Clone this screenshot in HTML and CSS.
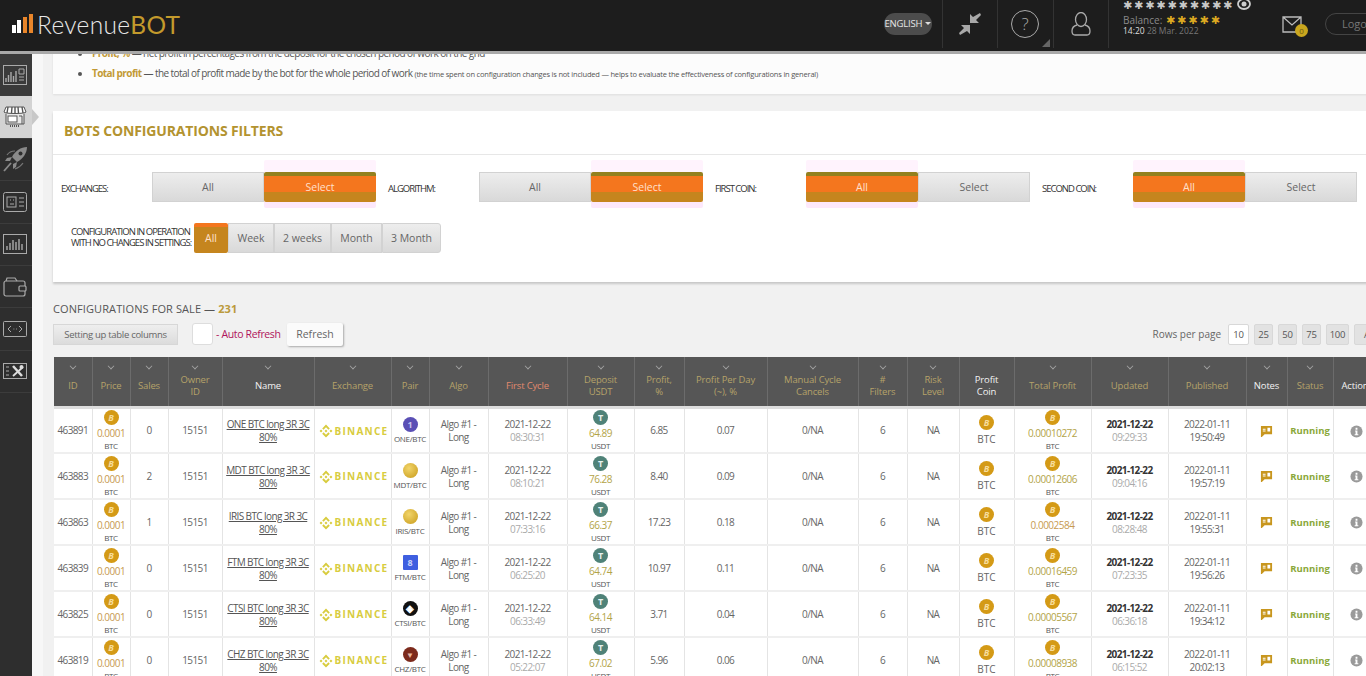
FILE: index.html
```html
<!DOCTYPE html>
<html lang="en">
<head>
<meta charset="utf-8">
<title>RevenueBOT</title>
<link rel="stylesheet" href="styles.css">
</head>
<body>
<svg class="defs" width="0" height="0">
  <symbol id="bn" viewBox="0 0 24 24"><path fill="currentColor" d="M12 1l6.500 6.500-2.300 2.300L12 5.600 7.800 9.800 5.500 7.500zM12 23l-6.500-6.500 2.300-2.300 4.200 4.200 4.200-4.200 2.300 2.300zM3.500 9.500L6 12l-2.500 2.500L1 12zM20.500 9.500L23 12l-2.500 2.500L18 12zM12 9.500l2.500 2.500-2.500 2.500L9.500 12z"/></symbol>
  <symbol id="note" viewBox="0 0 14 14"><path fill="#c8961e" d="M1 1h12v9H5l-3 3H1z"/><path fill="#fff" d="M8 3h3v4H8zM3 4h3v1H3zM3 6h3v1H3z"/></symbol>
  <symbol id="info" viewBox="0 0 14 14"><circle cx="7" cy="7" r="6.500" fill="#9a9a9a"/><path fill="#fff" d="M6 3h2v2H6zM5.500 6H8v4h1v1H5v-1h1V7h-.5z"/></symbol>
</svg>
<header class="top">
  <div class="brand">
    <svg class="bars" width="22" height="20" viewBox="0 0 22 20"><path fill="#fff" d="M0 11h4v8H0zM5 6h4v13H5z"/><path fill="#e8852a" d="M11 3h4v16h-4zM17 0h4v19h-4z"/></svg>
    <span class="word">Revenue<b>BOT</b></span>
  </div>
  <div class="lang">ENGLISH <i class="caret"></i></div>
  <div class="hcell">
    <svg width="24" height="22" viewBox="0 0 24 22"><path fill="#a8a8a8" d="M22 0l1 2-5 5 3 3h-9V1l3 3zM2 22l-1-2 5-5-3-3h9v9l-3-3z"/></svg>
  </div>
  <div class="hcell help">
    <svg width="30" height="30" viewBox="0 0 30 30"><circle cx="15" cy="15" r="13.500" fill="none" stroke="#aaa"/><text x="15" y="21" font-size="17" font-family="Open Sans" font-weight="300" text-anchor="middle" fill="#aaa">?</text></svg>
  </div>
  <div class="hcell">
    <svg width="20" height="24" viewBox="0 0 20 24"><ellipse cx="10" cy="7.500" rx="5.500" ry="7" fill="none" stroke="#aaa" stroke-width="1.300"/><path d="M6 13C2 14 1 16 1 19c0 3 1 4 3 4h12c2 0 3-1 3-4 0-3-1-5-5-6" fill="none" stroke="#aaa" stroke-width="1.300"/></svg>
  </div>
  <div class="account">
    <div class="mask">✱✱✱✱✱✱✱✱✱✱<svg width="14" height="12" viewBox="0 0 14 12"><ellipse cx="7" cy="6" rx="6" ry="5" fill="none" stroke="#ccc" stroke-width="1.800"/><circle cx="7" cy="6" r="2.500" fill="#ccc"/></svg></div>
    <div class="bal">Balance: <span>✱✱✱✱✱</span></div>
    <div class="when"><b>14:20</b> 28 Mar. 2022</div>
  </div>
  <div class="mail">
    <svg width="20" height="17" viewBox="0 0 20 17"><path d="M1 1h18v15H1zM1 1l9 8 9-8" fill="none" stroke="#bbb" stroke-width="1.300"/></svg>
    <span class="badge">0</span>
  </div>
  <div class="logout">Logout</div>
</header>
<div class="shell">
  <nav class="side">
    <a class="nav dim"><svg width="24" height="20" viewBox="0 0 24 20"><g fill="none" stroke="#aaa"><rect x=".5" y=".5" width="23" height="19"/><path d="M3 17v-4M5.500 17V10M8 17V7M10.500 17V11M13 17V6" stroke-width="1.400"/><path d="M16 4h5v5h-5zM16 12h5M16 15h5"/></g></svg></a>
    <a class="nav on"><svg width="24" height="22" viewBox="0 0 24 22"><g fill="none" stroke="#555"><path d="M3 1h18l2 5c0 2-22 2-22 0z" fill="#fff"/><path d="M5 1L4 7M9 1L8.500 7M12 1v6M15 1l.5 6M19 1l1 6" stroke-width="1.400"/><path d="M3 8v10h18V8" fill="#e8e8e8"/><rect x="5" y="10" width="9" height="6" fill="#fff"/><path d="M16 10h3v8"/><path d="M7 20h10" stroke-width="2" stroke-dasharray="1 1"/></g></svg></a>
    <a class="nav"><svg width="26" height="26" viewBox="0 0 26 26"><path fill="#8a8a8a" d="M25 1c-6 0-12 4-15 10l5 5c6-3 10-9 10-15zM10 11l-5 1-2 3 5 0zM15 16l-1 5-3 2 0-5z"/><circle cx="18.500" cy="7.500" r="2" fill="#2e2e2e"/><path d="M9 17l-7 8" stroke="#8a8a8a" stroke-width="1.800" fill="none"/><path d="M5 9c2-3 5-4 8-4M21 17c-2 3-5 5-8 6" stroke="#777" stroke-width="1.200" fill="none"/></svg></a>
    <a class="nav"><svg width="24" height="20" viewBox="0 0 24 20"><g fill="none" stroke="#aaa"><rect x=".5" y=".5" width="23" height="19" rx="2"/><rect x="4" y="5" width="9" height="10"/><path d="M7 8h1M10 8h1M7 12h4M16 6h5M16 10h5M16 14h5"/></g></svg></a>
    <a class="nav"><svg width="24" height="20" viewBox="0 0 24 20"><g fill="none" stroke="#aaa"><rect x=".5" y=".5" width="23" height="19"/><path d="M4 16v-4M7 16V9M10 16V6M13 16V8M16 16V5M19 16v-6" stroke-width="1.400"/></g></svg></a>
    <a class="nav"><svg width="24" height="20" viewBox="0 0 24 20"><g fill="none" stroke="#aaa" stroke-width="1.200"><path d="M3 4l1-3h8l2 3"/><rect x="1" y="4" width="21" height="15" rx="2"/><rect x="16" y="9" width="7" height="5" rx="1" fill="#2e2e2e"/></g></svg></a>
    <a class="nav"><svg width="24" height="16" viewBox="0 0 24 16"><rect x=".5" y=".5" width="23" height="15" rx="1" fill="none" stroke="#aaa"/><path d="M8 5L5 8l3 3M16 5l3 3-3 3" fill="none" stroke="#aaa"/><path d="M10.500 8h.8M13 8h.8" stroke="#aaa"/></svg></a>
    <a class="nav"><svg width="24" height="16" viewBox="0 0 24 16"><rect x=".5" y=".5" width="23" height="15" fill="none" stroke="#aaa"/><path d="M3 4h3M3 8h3M3 12h3" stroke="#aaa"/><path d="M10 3l9 10" stroke="#ddd" stroke-width="2.500"/><path d="M20 4l-10 9" stroke="#ddd" stroke-width="1.800"/><circle cx="18.500" cy="4" r="2" fill="#ddd"/></svg></a>
  </nav>
  <main class="main">
    <section class="card notes">
      <ul>
        <li><b>Profit, %</b> — net profit in percentages from the deposit for the chosen period of work on the grid</li>
        <li><b>Total profit</b> — the total of profit made by the bot for the whole period of work <small>(the time spent on configuration changes is not included — helps to evaluate the effectiveness of configurations in general)</small></li>
      </ul>
    </section>
    <section class="card filters">
      <h2>BOTS CONFIGURATIONS FILTERS</h2>
      <div class="frow">
        <div class="fitem"><span class="flabel">EXCHANGES:</span><div class="seg"><button class="off">All</button><button class="act halo">Select</button></div></div>
        <div class="fitem"><span class="flabel">ALGORITHM:</span><div class="seg"><button class="off">All</button><button class="act halo">Select</button></div></div>
        <div class="fitem"><span class="flabel">FIRST COIN:</span><div class="seg"><button class="act halo">All</button><button class="off">Select</button></div></div>
        <div class="fitem"><span class="flabel">SECOND COIN:</span><div class="seg"><button class="act halo">All</button><button class="off">Select</button></div></div>
      </div>
      <div class="frow2">
        <span class="flabel2">CONFIGURATION IN OPERATION<br>WITH NO CHANGES IN SETTINGS:</span>
        <div class="seg2"><button class="act s34">All</button><button class="off s46">Week</button><button class="off s57">2 weeks</button><button class="off s51">Month</button><button class="off s59">3 Month</button></div>
      </div>
    </section>
    <h3 class="count">CONFIGURATIONS FOR SALE — <b>231</b></h3>
    <div class="tools">
      <button class="plain">Setting up table columns</button>
      <span class="check"></span>
      <span class="auto">- Auto Refresh</span>
      <button class="refresh">Refresh</button>
      <span class="rows">Rows per page</span>
      <div class="pager"><button class="cur">10</button><button>25</button><button>50</button><button>75</button><button class="wide">100</button><button class="last">All</button></div>
    </div>
    <table class="grid">
      <colgroup><col class="c38"><col class="c38"><col class="c38"><col class="c54"><col class="c92"><col class="c77"><col class="c38"><col class="c59"><col class="c79"><col class="c67"><col class="c50"><col class="c83"><col class="c91"><col class="c49"><col class="c52"><col class="c55"><col class="c77"><col class="c77"><col class="c78"><col class="c41"><col class="c46"><col class="c46"></colgroup>
      <thead><tr>
        <th>ID</th><th>Price</th><th>Sales</th><th>Owner<br>ID</th><th class="w">Name</th><th>Exchange</th><th>Pair</th><th>Algo</th><th class="r">First Cycle</th><th>Deposit<br>USDT</th><th>Profit,<br>%</th><th>Profit Per Day<br>(~), %</th><th>Manual Cycle<br>Cancels</th><th>#<br>Filters</th><th>Risk<br>Level</th><th class="w ns">Profit<br>Coin</th><th>Total Profit</th><th>Updated</th><th>Published</th><th class="w">Notes</th><th>Status</th><th class="w act-h ns">Action</th>
      </tr></thead>
      <tbody>
        <tr><td>463891</td><td><i class="coin btc">B</i><span class="amt">0.0001</span><span class="unit">BTC</span></td><td>0</td><td>15151</td><td><a class="nm">ONE BTC long 3R 3C 80%</a></td><td class="ex"><svg class="bn"><use href="#bn"/></svg><span>BINANCE</span></td><td><i class="coin one">1</i><span class="unit">ONE/BTC</span></td><td>Algo #1 - Long</td><td>2021-12-22<span class="tm">08:30:31</span></td><td><i class="coin usdt">T</i><span class="amt g">64.89</span><span class="unit">USDT</span></td><td>6.85</td><td>0.07</td><td>0/NA</td><td>6</td><td>NA</td><td><i class="coin btc">B</i><span class="pc">BTC</span></td><td><i class="coin btc">B</i><span class="amt g">0.00010272</span><span class="unit">BTC</span></td><td><strong>2021-12-22</strong><span class="tm">09:29:33</span></td><td>2022-01-11<span class="dt">19:50:49</span></td><td><svg class="ic"><use href="#note"/></svg></td><td class="run">Running</td><td><svg class="ic"><use href="#info"/></svg></td></tr>
        <tr><td>463883</td><td><i class="coin btc">B</i><span class="amt">0.0001</span><span class="unit">BTC</span></td><td>2</td><td>15151</td><td><a class="nm">MDT BTC long 3R 3C 80%</a></td><td class="ex"><svg class="bn"><use href="#bn"/></svg><span>BINANCE</span></td><td><i class="coin gold"></i><span class="unit">MDT/BTC</span></td><td>Algo #1 - Long</td><td>2021-12-22<span class="tm">08:10:21</span></td><td><i class="coin usdt">T</i><span class="amt g">76.28</span><span class="unit">USDT</span></td><td>8.40</td><td>0.09</td><td>0/NA</td><td>6</td><td>NA</td><td><i class="coin btc">B</i><span class="pc">BTC</span></td><td><i class="coin btc">B</i><span class="amt g">0.00012606</span><span class="unit">BTC</span></td><td><strong>2021-12-22</strong><span class="tm">09:04:16</span></td><td>2022-01-11<span class="dt">19:57:19</span></td><td><svg class="ic"><use href="#note"/></svg></td><td class="run">Running</td><td><svg class="ic"><use href="#info"/></svg></td></tr>
        <tr><td>463863</td><td><i class="coin btc">B</i><span class="amt">0.0001</span><span class="unit">BTC</span></td><td>1</td><td>15151</td><td><a class="nm">IRIS BTC long 3R 3C 80%</a></td><td class="ex"><svg class="bn"><use href="#bn"/></svg><span>BINANCE</span></td><td><i class="coin gold"></i><span class="unit">IRIS/BTC</span></td><td>Algo #1 - Long</td><td>2021-12-22<span class="tm">07:33:16</span></td><td><i class="coin usdt">T</i><span class="amt g">66.37</span><span class="unit">USDT</span></td><td>17.23</td><td>0.18</td><td>0/NA</td><td>6</td><td>NA</td><td><i class="coin btc">B</i><span class="pc">BTC</span></td><td><i class="coin btc">B</i><span class="amt">0.0002584</span><span class="unit">BTC</span></td><td><strong>2021-12-22</strong><span class="tm">08:28:48</span></td><td>2022-01-11<span class="dt">19:55:31</span></td><td><svg class="ic"><use href="#note"/></svg></td><td class="run">Running</td><td><svg class="ic"><use href="#info"/></svg></td></tr>
        <tr><td>463839</td><td><i class="coin btc">B</i><span class="amt">0.0001</span><span class="unit">BTC</span></td><td>0</td><td>15151</td><td><a class="nm">FTM BTC long 3R 3C 80%</a></td><td class="ex"><svg class="bn"><use href="#bn"/></svg><span>BINANCE</span></td><td><i class="coin ftm">8</i><span class="unit">FTM/BTC</span></td><td>Algo #1 - Long</td><td>2021-12-22<span class="tm">06:25:20</span></td><td><i class="coin usdt">T</i><span class="amt g">64.74</span><span class="unit">USDT</span></td><td>10.97</td><td>0.11</td><td>0/NA</td><td>6</td><td>NA</td><td><i class="coin btc">B</i><span class="pc">BTC</span></td><td><i class="coin btc">B</i><span class="amt g">0.00016459</span><span class="unit">BTC</span></td><td><strong>2021-12-22</strong><span class="tm">07:23:35</span></td><td>2022-01-11<span class="dt">19:56:26</span></td><td><svg class="ic"><use href="#note"/></svg></td><td class="run">Running</td><td><svg class="ic"><use href="#info"/></svg></td></tr>
        <tr><td>463825</td><td><i class="coin btc">B</i><span class="amt">0.0001</span><span class="unit">BTC</span></td><td>0</td><td>15151</td><td><a class="nm">CTSI BTC long 3R 3C 80%</a></td><td class="ex"><svg class="bn"><use href="#bn"/></svg><span>BINANCE</span></td><td><i class="coin ctsi">◈</i><span class="unit">CTSI/BTC</span></td><td>Algo #1 - Long</td><td>2021-12-22<span class="tm">06:33:49</span></td><td><i class="coin usdt">T</i><span class="amt g">64.14</span><span class="unit">USDT</span></td><td>3.71</td><td>0.04</td><td>0/NA</td><td>6</td><td>NA</td><td><i class="coin btc">B</i><span class="pc">BTC</span></td><td><i class="coin btc">B</i><span class="amt g">0.00005567</span><span class="unit">BTC</span></td><td><strong>2021-12-22</strong><span class="tm">06:36:18</span></td><td>2022-01-11<span class="dt">19:34:12</span></td><td><svg class="ic"><use href="#note"/></svg></td><td class="run">Running</td><td><svg class="ic"><use href="#info"/></svg></td></tr>
        <tr><td>463819</td><td><i class="coin btc">B</i><span class="amt">0.0001</span><span class="unit">BTC</span></td><td>0</td><td>15151</td><td><a class="nm">CHZ BTC long 3R 3C 80%</a></td><td class="ex"><svg class="bn"><use href="#bn"/></svg><span>BINANCE</span></td><td><i class="coin chz">▼</i><span class="unit">CHZ/BTC</span></td><td>Algo #1 - Long</td><td>2021-12-22<span class="tm">05:22:07</span></td><td><i class="coin usdt">T</i><span class="amt g">67.02</span><span class="unit">USDT</span></td><td>5.96</td><td>0.06</td><td>0/NA</td><td>6</td><td>NA</td><td><i class="coin btc">B</i><span class="pc">BTC</span></td><td><i class="coin btc">B</i><span class="amt g">0.00008938</span><span class="unit">BTC</span></td><td><strong>2021-12-22</strong><span class="tm">06:15:52</span></td><td>2022-01-11<span class="dt">20:02:13</span></td><td><svg class="ic"><use href="#note"/></svg></td><td class="run">Running</td><td><svg class="ic"><use href="#info"/></svg></td></tr>
      </tbody>
    </table>
  </main>
</div>
</body>
</html>
```
FILE: styles.css
```css
* { box-sizing: border-box; }
html, body { margin: 0; height: 676px; overflow: hidden; }
body { background: #f1f1f1; font-family: "Open Sans", "Liberation Sans", sans-serif; color: #555; }
.defs { position: absolute; }
button { font-family: inherit; cursor: pointer; }

/* header */
.top { position: relative; z-index: 3; height: 54px; background: #1d1d1d; border-bottom: 3px solid #a9a9a9; display: flex; align-items: stretch; color: #aaa; }
.brand { flex: 1; display: flex; align-items: center; padding: 0 0 3px 12px; }
.bars { margin-right: 3px; }
.word { font-family: Lato, "Open Sans", sans-serif; font-weight: 300; font-size: 24.500px; color: #e8e8e8; letter-spacing: .3px; }
.word b { font-weight: 400; color: #c39a2c; }
.lang { align-self: flex-start; margin: 13px 10px 0 0; width: 48px; height: 22px; border-radius: 11px; background: #4c4c4c; color: #e6e6e6; font-size: 9.500px; line-height: 22px; text-align: center; white-space: nowrap; letter-spacing: -.2px; }
.caret { display: inline-block; border: 3px solid transparent; border-top-color: #ddd; border-bottom: 0; vertical-align: 2px; }
.hcell { position: relative; width: 55.500px; height: 48px; border-left: 1px solid #333; display: flex; align-items: center; justify-content: center; }
.help::after { content: ""; position: absolute; right: 3px; bottom: 1px; border: 4px solid transparent; border-right-color: #666; border-bottom-color: #666; }
.account { width: 157px; height: 48px; border-left: 1px solid #333; padding-left: 14px; display: flex; flex-direction: column; }
.mask { margin-top: -2px; font-family: "DejaVu Sans", sans-serif; font-size: 11px; line-height: 12px; color: #c9c9c9; white-space: nowrap; letter-spacing: 1.900px; }
.mask svg { margin-left: 3px; vertical-align: -1px; }
.bal { margin-top: 2px; font-size: 10px; line-height: 12px; color: #8a8a8a; white-space: nowrap; }
.bal span { margin-left: 1px; font-family: "DejaVu Sans", sans-serif; color: #dca921; letter-spacing: 2px; font-size: 11px; }
.when { margin-top: -2px; font-size: 8.500px; line-height: 11px; color: #777; white-space: nowrap; }
.when b { font-weight: 400; color: #ddd; }
.mail { position: relative; width: 60px; padding: 16px 0 0 17px; }
.mail svg { display: block; }
.badge { position: absolute; left: 30px; top: 24px; width: 13px; height: 13px; border-radius: 50%; background: #c9a61e; color: #6f5a10; font-size: 8px; line-height: 13px; text-align: center; }
.logout { align-self: flex-start; margin-top: 13px; width: 60px; margin-right: -19px; height: 22px; border: 1px solid #444; border-radius: 11px; font-size: 11px; line-height: 20px; padding-left: 16px; color: #777; white-space: nowrap; }

/* shell */
.shell { display: flex; height: 622px; }
.side { flex: none; width: 43px; background: #2e2e2e; border-right: 11px solid #f7f7f7; position: relative; box-shadow: inset 0 2px 0 #b59a2c; }
.nav { position: relative; display: flex; align-items: center; justify-content: center; height: 42.400px; padding-right: 3px; border-bottom: 1px solid #3c3c3c; }
.dim { background: #3a3a3a; }
.on { background: #d3d3d3; }
.on::after { content: ""; position: absolute; left: 100%; top: 50%; margin-top: -8px; border: 8px solid transparent; border-left: 7px solid #c8c8c8; }
.main { flex: 1; min-width: 0; margin-top: -10px; padding-left: 10px; overflow: hidden; }

/* cards */
.card { background: #fff; box-shadow: 0 1px 2px #ddd; }
.notes { height: 50px; background: #fcfcfc; font-size: 10px; letter-spacing: -.57px; margin-right: -8px; }
.notes ul { margin: 0; padding: 0 0 0 39px; }
.notes li { height: 19.500px; line-height: 19px; color: #555; white-space: nowrap; }
.notes li b { color: #c29a35; }
.notes small { font-size: 7.500px; letter-spacing: -.2px; }
.filters { margin-top: 17px; height: 171px; box-shadow: 0 2px 2px #c8c8c8; margin-right: -8px; }
h2 { margin: 0; height: 44px; padding: 0 0 0 11px; font-size: 14px; line-height: 39px; letter-spacing: -.15px; font-weight: 700; color: #b39330; border-bottom: 1px solid #e7e7e7; }
.frow { display: flex; padding: 17px 0 0 8px; }
.fitem { flex: none; width: 327px; display: flex; align-items: center; }
.flabel { width: 91px; flex: none; font-size: 9.500px; letter-spacing: -1px; color: #333; padding-top: 3px; }
.seg { display: flex; width: 224px; height: 30px; border-radius: 3px; }
.seg button { width: 112px; font-size: 10.500px; }
.off { background: linear-gradient(#ededed, #d9d9d9); border: 1px solid #d2d2d2; color: #666; padding: 0 0 1px; }
.act { background: linear-gradient(#93801f 0 4px, #f4761e 4px 20px, #c5851e 20px); border: 0; color: #ffe0cc; padding: 0 0 1px; border-radius: 2px; }
.halo { box-shadow: 0 -12px 0 #fff3fd, 0 6px 0 #fde8fb; }
.frow2 { display: flex; margin-top: 21px; padding-left: 18px; }
.flabel2 { width: 123px; flex: none; padding-top: 3px; font-size: 9.500px; line-height: 11px; letter-spacing: -.95px; color: #333; white-space: nowrap; }
.seg2 { display: flex; height: 30px; }
.seg2 button { font-size: 10.500px; }
.s34 { width: 34px; background: linear-gradient(#f4761e 0 4px, #c5851e 4px); }
.s46 { width: 46px; }
.s57 { width: 57px; }
.s51 { width: 51px; }
.s59 { width: 59px; border-radius: 0 3px 3px 0; }
.count { margin: 18px 0 0; height: 18px; font-size: 11px; line-height: 18px; font-weight: 400; color: #555; letter-spacing: .1px; }
.count b { color: #bb9a3c; }

/* toolbar */
.tools { display: flex; align-items: center; height: 24px; margin-top: 4px; }
.plain { width: 125px; height: 21px; border: 1px solid #d7d7d7; background: linear-gradient(#eee, #dcdcdc); color: #666; font-size: 9.500px; letter-spacing: -.3px; padding: 0; }
.check { width: 21px; height: 22px; margin-left: 14px; background: #fff; border: 1px solid #ddd; border-radius: 3px; }
.auto { width: 71px; margin-left: 3px; font-size: 10.500px; letter-spacing: -.35px; color: #b0145c; white-space: nowrap; }
.refresh { width: 56px; height: 23px; padding: 0; background: #fbfbfb; border: 0; border-radius: 2px; box-shadow: 1px 1px 2px #aaa; color: #666; font-size: 10.500px; }
.rows { margin-left: auto; font-size: 10px; color: #666; white-space: nowrap; }
.pager { display: flex; gap: 5px; margin: 0 -18px 0 7px; }
.pager button { min-width: 19px; height: 21px; padding: 0 2px; font-size: 9.500px; letter-spacing: -.2px; background: #e2e2e2; border: 1px solid #d8d8d8; border-radius: 2px; color: #555; }
.pager .cur { background: #fff; width: 21px; }
.pager .wide { width: 23px; }
.pager .last { width: 30px; }

/* table */
.grid { margin: 11px 0 0 1px; width: 1325px; table-layout: fixed; border-collapse: collapse; background: #fff; font-size: 10px; letter-spacing: -.6px; }
.c38 { width: 38px; } .c54 { width: 54px; } .c92 { width: 92px; } .c77 { width: 77px; } .c59 { width: 59px; } .c79 { width: 79px; } .c67 { width: 67px; } .c50 { width: 50px; } .c83 { width: 83px; } .c91 { width: 91px; } .c49 { width: 49px; } .c52 { width: 52px; } .c55 { width: 55px; } .c78 { width: 78px; } .c41 { width: 41px; } .c46 { width: 46px; }
th { position: relative; height: 50px; padding: 9px 2px 0; background: #565656; color: #b5a269; font-size: 9.500px; line-height: 12px; letter-spacing: -.15px; font-weight: 400; border-right: 1px solid #6c6c6c; border-bottom: 3px solid #ddd; text-align: center; }
th::before { content: ""; position: absolute; top: 6px; left: 50%; width: 5px; height: 5px; margin-left: -3px; border-right: 1px solid #a5a5a5; border-bottom: 1px solid #a5a5a5; transform: rotate(45deg) scale(.8); }
th.ns::before { display: none; }
th.w { color: #f2f2f2; }
th.r { color: #e28a6e; }
.act-h { text-align: left; padding-left: 8px; white-space: nowrap; }
td { height: 46px; padding: 1px 1px 0; text-align: center; vertical-align: middle; border-right: 1px solid #e4e4e4; border-bottom: 2px solid #efefef; line-height: 13px; color: #666; }
.coin { display: block; width: 15px; height: 15px; margin: 0 auto; border-radius: 50%; font-style: normal; font-size: 9px; font-weight: 700; line-height: 15px; color: #fff; text-align: center; letter-spacing: 0; }
.btc { background: #d49a16; color: #f7dd9c; font-style: italic; }
.usdt { background: #4f8278; color: #e8f2f0; }
.one { background: #5a4fb5; color: #c8c4ee; }
.gold { background: radial-gradient(circle at 40% 35%, #f2d56a, #c79a1a); }
.ftm { border-radius: 1px; background: #3f5fe0; color: #c9d3fb; }
.ctsi { background: #111; font-size: 10px; }
.chz { background: #7c2a1c; color: #e8b8a0; font-size: 8px; }
.amt { display: block; margin-top: 2px; font-size: 10px; line-height: 12px; letter-spacing: -.5px; color: #c79a50; }
.g { color: #b3a448; }
.unit { display: block; margin-top: 1px; font-size: 8px; line-height: 11px; letter-spacing: -.3px; color: #555; white-space: nowrap; }
.pc { display: block; margin-top: 3px; font-size: 10px; line-height: 13px; letter-spacing: 0; }
.tm { display: block; color: #aaa; }
.dt { display: block; color: #666; }
td strong { font-weight: 700; color: #333; }
.nm { color: #555; text-decoration: underline; display: block; padding: 0 2px; }
.ex { white-space: nowrap; color: #d8cc3e; font-weight: 700; font-size: 10px; letter-spacing: 1.250px; text-align: left; padding-left: 4px; }
.ex span { vertical-align: middle; }
.bn { width: 14px; height: 14px; vertical-align: middle; margin-right: 2px; }
.ic { width: 13px; height: 13px; vertical-align: middle; }
.run { font-weight: 700; font-size: 9.500px; color: #8aa83a; letter-spacing: 0; }
```
